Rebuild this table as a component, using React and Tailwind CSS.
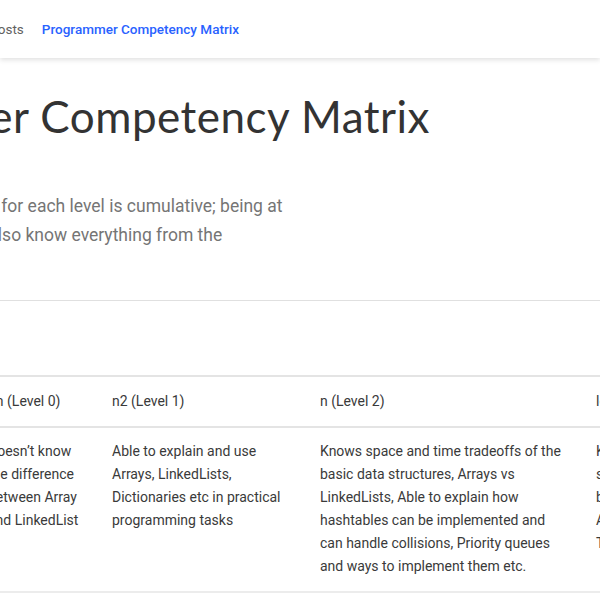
const levels = ['2n (Level 0)', 'n2 (Level 1)', 'n (Level 2)', 'log(n) (Level 3)']

const dataStructures = [
  'Doesn’t know the difference between Array and LinkedList',
  'Able to explain and use Arrays, LinkedLists, Dictionaries etc in practical programming tasks',
  'Knows space and time tradeoffs of the basic data structures, Arrays vs LinkedLists, Able to explain how hashtables can be implemented and can handle collisions, Priority queues and ways to implement them etc.',
  'Knows advanced data structures like B-trees, binomial and fibonacci heaps, AVL/Red Black trees, Splay Trees, Skip Lists, tries etc.',
]

export default function App() {
  return (
    <div className="w-[600px] min-h-[600px] overflow-hidden bg-white font-['Roboto',sans-serif]">
      {/* top nav */}
      <nav className="relative h-[58px] flex items-center bg-white shadow-[0_2px_5px_rgba(0,0,0,0.12)]">
        <div className="flex items-center gap-[18px] ml-[-65px] text-[13.5px] whitespace-nowrap">
          <a className="text-[#616161]">Home</a>
          <a className="text-[#616161]">Posts</a>
          <a className="text-[#2962ff] font-medium">Programmer Competency Matrix</a>
        </div>
      </nav>

      {/* title */}
      <div className="mt-[32px] w-[430px] flex justify-end whitespace-nowrap">
        <h1 className="font-['Lato',sans-serif] text-[44px] leading-[1.2] font-normal tracking-[0.5px] text-[#333]">
          Programmer Competency Matrix
        </h1>
      </div>

      {/* intro */}
      <p className="mt-[49px] ml-[-193px] whitespace-nowrap text-[17.5px] leading-[28.8px] text-[#757575]">
        Note that the knowledge for each level is cumulative; being at
        <br />
        level n implies that you also know everything from the
        <br />
        levels lower than n.
      </p>

      <hr className="mt-[22px] border-0 border-t border-[#e0e0e0]" />

      {/* matrix */}
      <div className="mt-[74px] ml-[-206px] w-max text-[14px] text-[#3a3a3a]">
        <div className="grid grid-cols-[178px_124px_208px_276px_222px] h-[53px] items-center border-y-2 border-[#e4e4e4]">
          <div className="px-4"></div>
          {levels.map((l) => (
            <div key={l} className="px-4 whitespace-nowrap">{l}</div>
          ))}
        </div>
        <div className="grid grid-cols-[178px_124px_208px_276px_222px] items-start pt-[12px] pb-[13px] leading-[23px] border-b-2 border-[#ececec]">
          <div className="px-4 font-medium">data structures</div>
          {dataStructures.map((t, i) => (
            <div key={i} className="px-4">{t}</div>
          ))}
        </div>
      </div>
    </div>
  )
}
